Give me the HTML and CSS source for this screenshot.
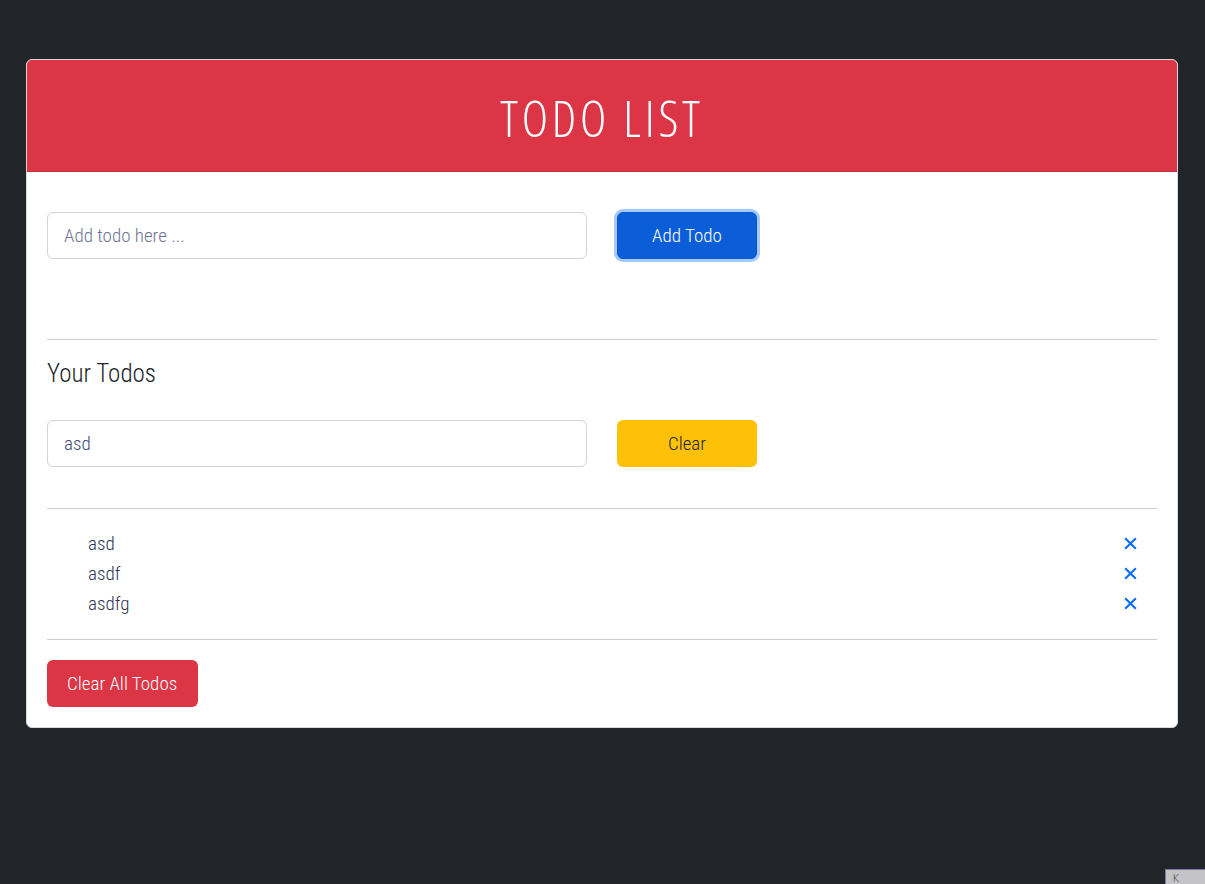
FILE: index.html
```html
<!DOCTYPE html>
<html lang="en">
<head>
    <meta charset="UTF-8">
    <meta name="viewport" content="width=device-width, initial-scale=1.0">
    <title>Todo List</title>
    <link rel="stylesheet" href="styles.css">
</head>
<body>
    <div class="card">
        <div class="card-header">
            <h1>TODO LIST</h1>
        </div>

        <div class="card-body">
            <form class="row-form" id="todoForm">
                <input type="text" id="todoInput" placeholder="Add todo here ...">
                <button type="submit" class="btn btn-primary focused">Add Todo</button>
            </form>

            <hr class="hr-top">
            <h5 class="section-title">Your Todos</h5>

            <div class="row-form">
                <input type="text" id="filterInput" value="asd">
                <button type="button" class="btn btn-warning">Clear</button>
            </div>

            <hr class="hr-list">
            <ul class="todo-list" id="todoList">
                <li>asd <a href="#" class="delete"><svg viewBox="0 0 14 14"><path d="M2 2 L12 12 M12 2 L2 12"/></svg></a></li>
                <li>asdf <a href="#" class="delete"><svg viewBox="0 0 14 14"><path d="M2 2 L12 12 M12 2 L2 12"/></svg></a></li>
                <li>asdfg <a href="#" class="delete"><svg viewBox="0 0 14 14"><path d="M2 2 L12 12 M12 2 L2 12"/></svg></a></li>
            </ul>
            <hr class="hr-bottom">

            <button type="button" class="btn btn-danger">Clear All Todos</button>
        </div>
    </div>

    <div class="corner-tip">K</div>

    <script>
        // Remove a todo when its cross is clicked
        document.querySelectorAll('.delete').forEach(link => {
            link.addEventListener('click', e => {
                e.preventDefault();
                link.parentElement.remove();
            });
        });
    </script>
</body>
</html>
```
FILE: styles.css
```css
body {
    margin: 0;
    background-color: #212529;
    font-family: "Roboto Condensed", Roboto, sans-serif;
    font-weight: 300;
    color: #212529;
}
.card {
    width: 1150px;
    margin: 59px 0 0 26px;
    background-color: white;
    border: 1px solid #d8d8de;
    border-radius: 6px;
    overflow: hidden;
}
.card-header {
    background-color: #dc3545;
    height: 111px;
    display: flex;
    align-items: center;
    justify-content: center;
    border-bottom: 1px solid #c82f3e;
}
.card-header h1 {
    margin: 0;
    padding-top: 5px;
    color: white;
    font-family: "Open Sans", sans-serif;
    font-stretch: condensed;
    font-weight: 300;
    font-size: 50px;
    letter-spacing: 3.8px;
    line-height: 1;
}
.card-body {
    padding: 40px 20px 20px;
}
.row-form {
    display: flex;
    gap: 30px;
    margin: 0;
}
input {
    width: 540px;
    height: 47px;
    box-sizing: border-box;
    padding: 0 16px;
    border: 1px solid #ced4da;
    border-radius: 6px;
    font-family: inherit;
    font-weight: 300;
    font-size: 19px;
    color: #3d4a7a;
    outline: none;
}
input::placeholder {
    color: #6f7296;
}
.btn {
    width: 140px;
    height: 47px;
    border: 1px solid transparent;
    border-radius: 6px;
    font-family: inherit;
    font-weight: 300;
    font-size: 19px;
    cursor: pointer;
}
.btn-primary {
    background-color: #0b5ed7;
    color: white;
}
.btn-primary.focused {
    border-color: #0a58ca;
    box-shadow: 0 0 0 3px #a5c9fb;
}
.btn-warning {
    background-color: #ffc107;
    color: #212529;
}
.btn-danger {
    width: auto;
    padding: 0 20px 0 19px;
    background-color: #dc3545;
    color: white;
}
hr {
    border: none;
    border-top: 1px solid #cccccc;
    margin: 0;
}
.hr-top {
    margin-top: 80px;
}
.section-title {
    margin: 19px 0 31px;
    font-size: 25px;
    font-weight: 300;
    line-height: 30px;
}
.hr-list {
    margin-top: 41px;
}
.todo-list {
    list-style: none;
    margin: 19px 0 21px;
    padding: 0 19px 0 41px;
}
.todo-list li {
    display: flex;
    justify-content: space-between;
    align-items: center;
    height: 30px;
    font-size: 19px;
    color: #2e3450;
}
.delete {
    display: flex;
}
.delete svg {
    width: 15px;
    height: 15px;
    stroke: #0d6efd;
    stroke-width: 2;
    fill: none;
}
.hr-bottom {
    margin-bottom: 20px;
}
.corner-tip {
    position: fixed;
    left: 1165px;
    top: 869px;
    width: 40px;
    height: 20px;
    background-color: #c4c4c8;
    border: 1px solid #7a7aa0;
    border-right: none;
    font-family: "DejaVu Sans", sans-serif;
    font-size: 11px;
    padding: 2px 6px;
    box-sizing: border-box;
    overflow: hidden;
    white-space: nowrap;
    color: #333;
}
```
